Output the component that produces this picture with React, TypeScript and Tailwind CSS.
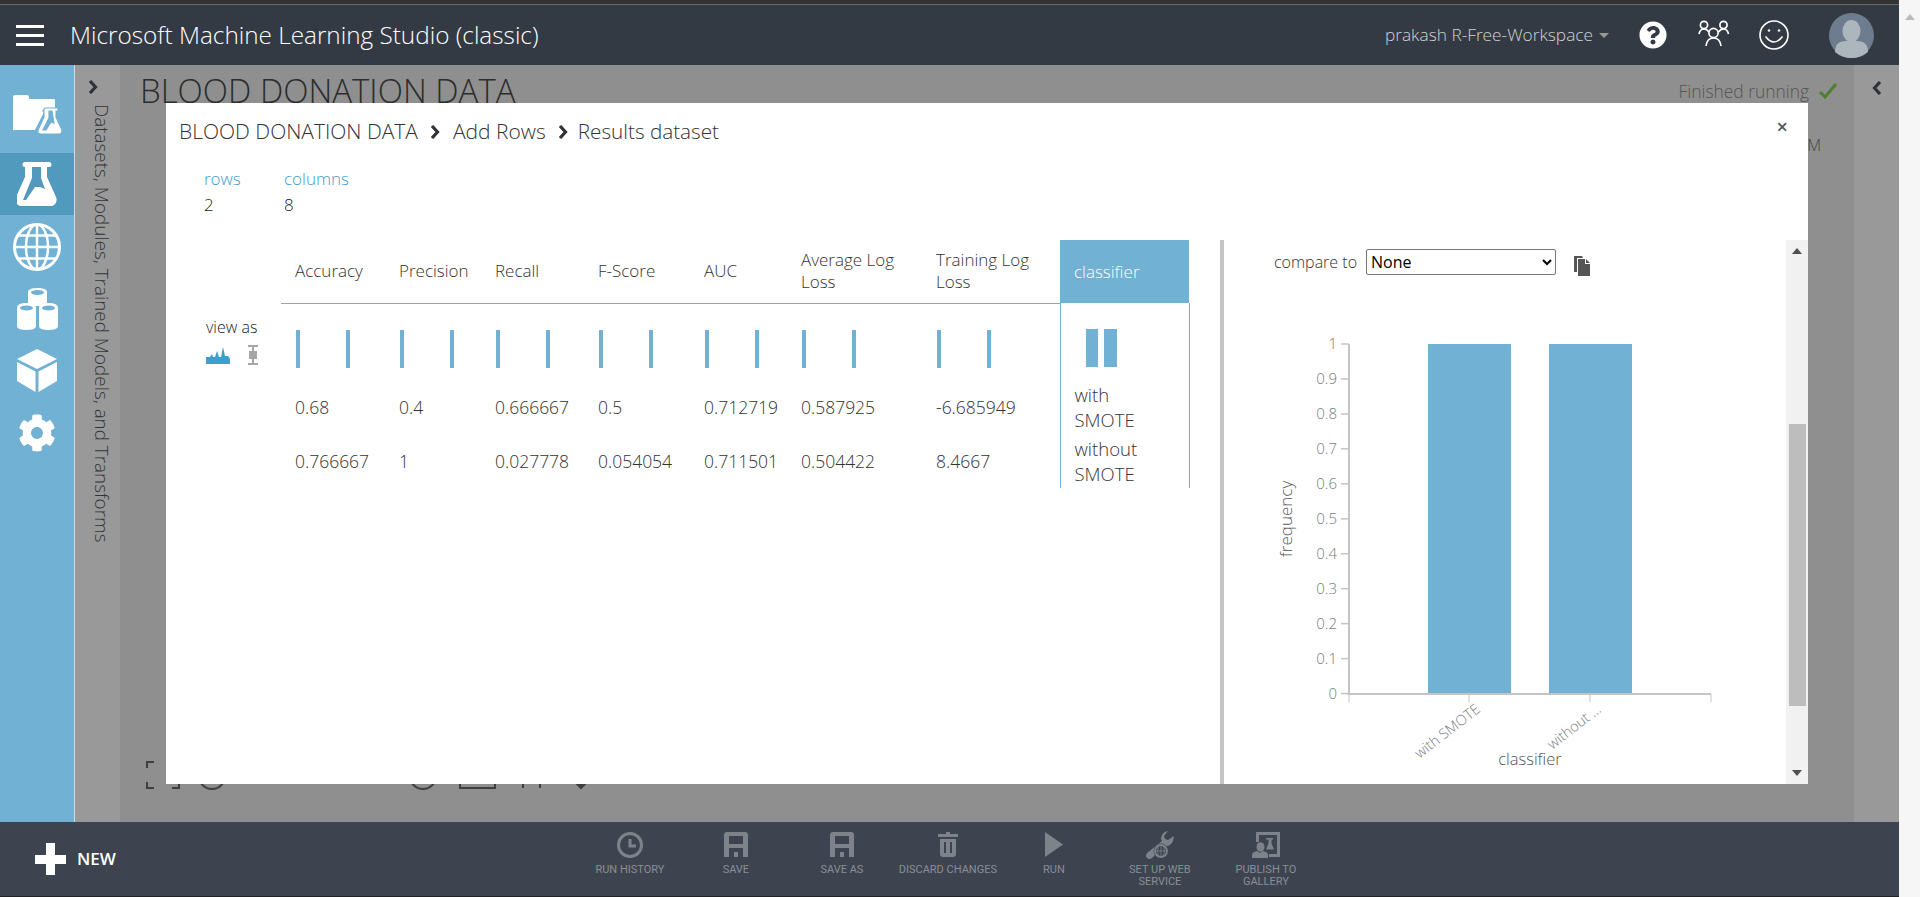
import { FaCog, FaQuestionCircle } from "react-icons/fa";

const font = { light: "font-['Open_Sans',sans-serif] font-light" };

function FolderFlaskIcon() {
  return (
    <svg width="49" height="40" viewBox="0 0 49 40" fill="white">
      <path d="M0 3a2 2 0 0 1 2-2h12a2 2 0 0 1 2 2v2h25a1 1 0 0 1 1 1v8H31v4l-9 18H0Z" />
      <path fillRule="evenodd" d="M32 14h13v3h-2v6l6 13q0 4-3 4H28q-4 0-3-4l6-13v-6h-1Zm4 3v7l-6 12h3l5-8 3 1-2-12Z" stroke="#71b1d3" strokeWidth="1.2" />
    </svg>
  );
}

function FlaskIcon() {
  return (
    <svg width="40" height="44" viewBox="0 0 40 44" fill="white">
      <path fillRule="evenodd" d="M8 0h24a2.500 2.500 0 0 1 0 5h-2v10l9 20q2 5-2 8l-2 1H3l-2-1q-4-3-2-8l9-20V5H8a2.500 2.500 0 0 1 0-5Zm7 5v11L6 38h3l9-13h5l5 2-4-11V5Z" />
    </svg>
  );
}

function GlobeIcon() {
  return (
    <svg width="48" height="48" viewBox="0 0 48 48" fill="none" stroke="white" strokeWidth="2.500">
      <circle cx="24" cy="24" r="22.500" strokeWidth="3" />
      <ellipse cx="24" cy="24" rx="11" ry="22.500" />
      <path d="M24 2v44M2 24h44M6 12.500h36M6 35.500h36" />
    </svg>
  );
}

function CylindersIcon() {
  return (
    <svg width="41" height="42" viewBox="0 0 41 42">
      <g fill="white">
        <path d="M11 4q0-4 9.500-4T30 4v10q0 4-9.500 4T11 14Z" />
        <path d="M0 20q0-5 9.500-5T19 20v18q0 4-9.500 4T0 38Z" />
        <path d="M22 20q0-5 9.500-5t9.500 5v18q0 4-9.500 4T22 38Z" />
      </g>
      <g fill="#71b1d3">
        <ellipse cx="20.500" cy="4.500" rx="6.500" ry="2.500" />
        <ellipse cx="9.500" cy="20" rx="6.500" ry="2.500" />
        <ellipse cx="31.500" cy="20" rx="6.500" ry="2.500" />
      </g>
    </svg>
  );
}

function CubeIcon() {
  return (
    <svg width="40" height="43" viewBox="0 0 40 43" fill="white">
      <path d="M20 0 40 10 20 20 0 10Z" />
      <path d="M0 13 18.500 22.500V43L0 32Z" />
      <path d="M40 13 21.500 22.500V43L40 32Z" />
    </svg>
  );
}

function PeopleIcon() {
  return (
    <svg width="32" height="30" viewBox="0 0 32 30" fill="none" stroke="white" strokeWidth="1.700">
      <circle cx="6" cy="5" r="3.600" />
      <circle cx="25.500" cy="5" r="3.600" />
      <circle cx="15.500" cy="13" r="4.600" />
      <path d="M1 14q1-5 5-5 3 0 5 3M30.500 14q-1-5-5-5-3 0-5 3M8 26q1-8 7.500-8t7.500 8" />
    </svg>
  );
}

function SmileIcon() {
  return (
    <svg width="30" height="30" viewBox="0 0 30 30" fill="none" stroke="white" strokeWidth="1.600">
      <circle cx="15" cy="15" r="14" />
      <circle cx="10" cy="10.500" r="1" fill="white" strokeWidth="0.500" />
      <circle cx="20" cy="10.500" r="1" fill="white" strokeWidth="0.500" />
      <path d="M6.500 16.500q8.500 11 17 0" />
    </svg>
  );
}

function AvatarIcon() {
  return (
    <svg width="45" height="45" viewBox="0 0 45 45">
      <circle cx="22.500" cy="22.500" r="22.500" fill="#6d7d8f" />
      <ellipse cx="22.500" cy="18" rx="9" ry="11" fill="#aeb6bd" />
      <path d="M6 39q0-11 11-11h11q11 0 11 11-7 6-16.500 6T6 39Z" fill="#aeb6bd" />
    </svg>
  );
}

function Chevron({ dir }: { dir: "left" | "right" }) {
  return (
    <svg width="10" height="14" viewBox="0 0 10 14" fill="none" stroke="#2f3338" strokeWidth="3.200">
      <path d={dir === "right" ? "M2 1l5.500 6L2 13" : "M8 1 2.500 7 8 13"} />
    </svg>
  );
}

const toolbar = [
  {
    label: "RUN HISTORY",
    icon: (
      <svg width="28" height="26" viewBox="0 0 28 26" fill="none" stroke="#7e838b" strokeWidth="3">
        <circle cx="14" cy="13" r="11.500" />
        <path d="M14 7v7h6" />
      </svg>
    ),
  },
  {
    label: "SAVE",
    icon: (
      <svg width="24" height="25" viewBox="0 0 24 25" fill="#7e838b" fillRule="evenodd">
        <path d="M3 0h18a3 3 0 0 1 3 3v22H0V3a3 3 0 0 1 3-3ZM5 4v8h14V4ZM5 16v9h14v-9ZM10 20h4v5h-4Z" />
      </svg>
    ),
  },
  {
    label: "SAVE AS",
    icon: (
      <svg width="24" height="25" viewBox="0 0 24 25" fill="#7e838b" fillRule="evenodd">
        <path d="M3 0h18a3 3 0 0 1 3 3v22H0V3a3 3 0 0 1 3-3ZM5 4v8h14V4ZM5 16v9h14v-9ZM10 20h4v5h-4Z" />
      </svg>
    ),
  },
  {
    label: "DISCARD CHANGES",
    icon: (
      <svg width="22" height="25" viewBox="0 0 22 25" fill="#7e838b" fillRule="evenodd">
        <path d="M9 0h4v2h8v3H1V2h8ZM3 7h16v15a3 3 0 0 1-3 3H6a3 3 0 0 1-3-3ZM7 10v11h2V10ZM13 10v11h2V10Z" />
      </svg>
    ),
  },
  {
    label: "RUN",
    icon: (
      <svg width="20" height="25" viewBox="0 0 20 25" fill="#7e838b">
        <path d="M1 0 19 12.500 1 25Z" />
      </svg>
    ),
  },
  {
    label: "SET UP WEB\nSERVICE",
    icon: (
      <svg width="28" height="28" viewBox="0 0 28 28" fill="#7e838b">
        <path d="M22 0q-6 1-7 7 0 2 1 3L1 22q-2 3 0 5t5 0l7-7 7-5q5 0 7-5l1-5-6 4-3-1-1-3Z" />
        <circle cx="15" cy="20" r="7.500" fill="#3d4450" />
        <circle cx="15" cy="20" r="6" fill="none" stroke="#7e838b" strokeWidth="1.800" />
        <path d="M15 14v12M9 20h12M12.500 15q-2 5 0 10M17.500 15q2 5 0 10" fill="none" stroke="#7e838b" strokeWidth="0.800" />
      </svg>
    ),
  },
  {
    label: "PUBLISH TO\nGALLERY",
    icon: (
      <svg width="28" height="26" viewBox="0 0 28 26" fill="#7e838b">
        <path d="M4 0h24v25H17v-3h8V3H7v7H4Z" />
        <path d="M14 6h7v1.500h-1.500v4l2.500 6h-8l2.500-6v-4H14Z" />
        <ellipse cx="8.500" cy="15" rx="4" ry="4.800" />
        <path d="M0 26v-3q0-3 5-4l3 2 3-2q5 1 5 4v3Z" />
      </svg>
    ),
  },
];

const sparkCols = [1, 2, 3, 4, 5, 6, 7];

const headers = [
  { label: "Accuracy", w: "w-[104px]" },
  { label: "Precision", w: "w-[96px]" },
  { label: "Recall", w: "w-[103px]" },
  { label: "F-Score", w: "w-[106px]" },
  { label: "AUC", w: "w-[97px]" },
  { label: "Average Log Loss", w: "w-[135px]" },
  { label: "Training Log Loss", w: "w-[138px]" },
];

const rows = [
  { values: ["0.68", "0.4", "0.666667", "0.5", "0.712719", "0.587925", "-6.685949"], cls: "with SMOTE" },
  { values: ["0.766667", "1", "0.027778", "0.054054", "0.711501", "0.504422", "8.4667"], cls: "without SMOTE" },
];

const yTicks = ["1", "0.9", "0.8", "0.7", "0.6", "0.5", "0.4", "0.3", "0.2", "0.1", "0"];

function Chart() {
  return (
    <svg width="562" height="494" viewBox="1224 290 562 494" className="block">
      <g fill="#777c82" fontFamily="Open Sans" fontWeight="300" fontSize="15">
        {yTicks.map((t, i) => {
          const y = 344 + i * 34.96;
          return (
            <g key={t}>
              <line x1="1341" x2="1349" y1={y} y2={y} stroke="#c4c4c4" strokeWidth="1.500" />
              <text x="1337" y={y + 5} textAnchor="end">
                {t}
              </text>
            </g>
          );
        })}
        <text transform="translate(1292 519) rotate(-90)" textAnchor="middle" fontSize="17" fill="#555">
          frequency
        </text>
        <text transform="translate(1481 711) rotate(-38)" textAnchor="end" fontSize="14.500">
          with SMOTE
        </text>
        <text transform="translate(1602 711) rotate(-38)" textAnchor="end" fontSize="14.500">
          without ...
        </text>
        <text x="1530" y="765" textAnchor="middle" fontSize="16.500" fill="#555">
          classifier
        </text>
      </g>
      <rect x="1428" y="344" width="83" height="350" fill="#71b1d3" />
      <rect x="1549" y="344" width="83" height="350" fill="#71b1d3" />
      <path d="M1349 344V694H1711" fill="none" stroke="#c4c4c4" strokeWidth="2" />
      <path d="M1349 694v8M1469 694v8M1590 694v8M1711 694v8" stroke="#c4c4c4" strokeWidth="1" />
    </svg>
  );
}

function ResultsTable() {
  return (
    <table className="w-[908px] table-fixed self-start border-collapse text-[17.500px] text-[#333]">
      <thead>
        <tr className="h-[63px] text-[17px]">
          {headers.map((h) => (
            <th key={h.label} className={`${h.w} border-b border-[#71b1d3] pl-[14px] pr-[4px] text-left font-light leading-[22px]`}>
              {h.label}
            </th>
          ))}
          <th className="w-[129px] bg-[#71b1d3] pl-[14px] text-left font-light text-white">classifier</th>
        </tr>
      </thead>
      <tbody>
        <tr className="h-[77px]">
          {sparkCols.map((c) => (
            <td key={c} className="pl-[15px] align-top">
              <div className="mt-[26px] flex gap-[46px]">
                <div className="h-[38px] w-[4px] bg-[#71b1d3]" />
                <div className="h-[38px] w-[4px] bg-[#71b1d3]" />
              </div>
            </td>
          ))}
          <td className="border-x border-[#71b1d3] pl-[25px] align-top">
            <div className="mt-[26px] flex gap-[6px]">
              <div className="h-[38px] w-[12px] bg-[#71b1d3]" />
              <div className="h-[38px] w-[13px] bg-[#71b1d3]" />
            </div>
          </td>
        </tr>
        {rows.map((r) => (
          <tr key={r.cls} className="h-[54px]">
            {r.values.map((v, i) => (
              <td key={i} className="pl-[14px] align-middle">
                {v}
              </td>
            ))}
            <td className="border-x border-[#71b1d3] pl-[14px] pr-[30px] text-[18.500px] leading-[25px]">{r.cls}</td>
          </tr>
        ))}
      </tbody>
    </table>
  );
}

function ResultsModal() {
  return (
    <div className="absolute left-[46px] top-[38px] flex h-[681px] w-[1642px] flex-col bg-white">
      <div className="relative flex h-[58px] items-center gap-[12px] pl-[13px] text-[21px] font-light text-[#333]">
        <span>BLOOD DONATION DATA</span>
        <Chevron dir="right" />
        <span className="ml-[1px]">Add Rows</span>
        <Chevron dir="right" />
        <span className="-ml-[2px] text-[20.700px]">Results dataset</span>
        <span className="absolute right-[20px] top-[14px] text-[20px] font-semibold leading-none text-[#555]">×</span>
      </div>
      <div className="mt-[5px] flex pl-[38px] text-[17px] font-light leading-[26px]">
        <div className="w-[80px]">
          <div className="text-[#3f9ccb]">rows</div>
          <div className="text-[#222]">2</div>
        </div>
        <div>
          <div className="text-[#3f9ccb]">columns</div>
          <div className="text-[#222]">8</div>
        </div>
      </div>
      <div className="mt-[22px] flex min-h-0 flex-1">
        <div className="flex w-[1054px] pl-[40px]">
          <div className="w-[75px] shrink-0 pt-[77px]">
            <div className="text-[16px] font-light leading-[20px] text-[#222]">view as</div>
            <div className="mt-[8px] flex items-end gap-[16px]">
              <svg width="26" height="17" viewBox="0 0 26 17" fill="#3b9fcc">
                <path d="M0 17V10h4l2-3 1 3h2l2-6 2 6h2l2-10 2 9h3l2 3v8Z" />
              </svg>
              <svg width="10" height="20" viewBox="0 0 10 20" fill="#a6a6a6" className="mb-[-1px]">
                <path d="M0 0h10v2H6v4h3v8H6v4h4v2H0v-2h4v-4H1V6h3V2H0Z" />
              </svg>
            </div>
          </div>
          <ResultsTable />
        </div>
        <div className="w-[4px] bg-[#c4c4c4]" />
        <div className="flex-1">
          <div className="flex items-center pl-[50px] pt-[7px]">
            <span className="mr-[9px] text-[16px] font-light text-[#333]">compare to</span>
            <select className="h-[26px] w-[190px] rounded-[2px] border border-[#767676] bg-white text-[16px] font-normal text-black">
              <option>None</option>
            </select>
            <svg width="16" height="20" viewBox="0 0 16 20" fill="#555" className="ml-[18px] mt-[9px]">
              <path d="M0 0h8l1 2H3v14H0Z" />
              <path d="M4 3h7v5h5v12H4Z" />
              <path d="M12 3l4 4h-4Z" />
            </svg>
          </div>
          <div className="mt-[14px]">
            <Chart />
          </div>
        </div>
        <div className="flex w-[22px] flex-col items-center justify-between bg-[#f1f1f1] py-[8px]">
          <div className="h-0 w-0 border-x-[5px] border-b-[6px] border-x-transparent border-b-[#505050]" />
          <div className="mx-auto mb-[64px] mt-[170px] w-[17px] flex-1 bg-[#bdbdbd]" />
          <div className="h-0 w-0 border-x-[5px] border-t-[6px] border-x-transparent border-t-[#505050]" />
        </div>
      </div>
    </div>
  );
}

export default function App() {
  return (
    <div className={`${font.light} flex h-[897px] w-[1920px] overflow-hidden bg-[#f6f6f6]`}>
      <div className="flex h-full w-[1899px] flex-col">
        <div className="h-[5px] border-b border-[#6a6a6a] bg-[#333]" />

        {/* top bar */}
        <header className="flex h-[60px] items-center bg-[#343a43] text-white">
          <div className="ml-[16px] flex w-[28px] flex-col gap-[6px]">
            <div className="h-[3px] bg-white" />
            <div className="h-[3px] bg-white" />
            <div className="h-[3px] bg-white" />
          </div>
          <div className="ml-[26px] text-[24.300px] leading-none">Microsoft Machine Learning Studio (classic)</div>
          <div className="ml-auto flex items-center">
            <span className="text-[17.300px] text-[#d0d2d4]">prakash R-Free-Workspace</span>
            <div className="ml-[6px] mt-[1px] h-0 w-0 border-x-[5px] border-t-[5px] border-x-transparent border-t-[#999]" />
            <FaQuestionCircle className="ml-[30px] text-white" size={28} />
            <div className="ml-[31px]">
              <PeopleIcon />
            </div>
            <div className="ml-[29px]">
              <SmileIcon />
            </div>
            <div className="ml-[40px] mr-[25px]">
              <AvatarIcon />
            </div>
          </div>
        </header>

        <div className="flex min-h-0 flex-1">
          {/* nav */}
          <nav className="flex w-[75px] flex-col border-r border-[#d4d9dc] bg-[#71b1d3]">
            <div className="flex h-[88px] items-center justify-center pt-[10px]">
              <FolderFlaskIcon />
            </div>
            <div className="flex h-[62px] items-center justify-center bg-[#5199bd]">
              <FlaskIcon />
            </div>
            <div className="flex h-[63px] items-center justify-center">
              <GlobeIcon />
            </div>
            <div className="flex h-[62px] items-center justify-center">
              <CylindersIcon />
            </div>
            <div className="flex h-[60px] items-center justify-center">
              <CubeIcon />
            </div>
            <div className="flex h-[66px] items-center justify-center">
              <FaCog className="text-white" size={38} />
            </div>
          </nav>

          {/* palette, collapsed */}
          <div className="flex w-[45px] flex-col items-center bg-[#999] pt-[15px]">
            <div className="-ml-[10px]">
              <Chevron dir="right" />
            </div>
            <div className="ml-[8px] mt-[10px] text-[18.850px] leading-[20px] text-[#333] [writing-mode:vertical-rl]">
              Datasets, Modules, Trained Models, and Transforms
            </div>
          </div>

          {/* canvas, dimmed behind the results dialog */}
          <main className="relative flex min-w-0 flex-1 flex-col bg-[#8f8f8f]">
            <div className="flex h-[50px] items-center justify-between pl-[20px] pr-[17px] pt-[2px]">
              <span className="text-[33px] text-[#2c2c2c]">BLOOD DONATION DATA</span>
              <span className="flex items-center gap-[10px] text-[17.400px] text-[#555]">
                Finished running
                <svg width="18" height="16" viewBox="0 0 18 16" fill="none" stroke="#4e7f2e" strokeWidth="3">
                  <path d="M1 9l5 5L17 1" />
                </svg>
              </span>
            </div>
            <div className="mt-[18px] flex justify-end pr-[33px] text-[16px] text-[#444]">M</div>
            <div className="mt-auto pb-[32px] pl-[26px]">
              <svg width="480" height="30" viewBox="146 760 480 30" fill="none" stroke="#3f3f3f" strokeWidth="2" className="block">
                <path d="M154 762h-7v6M172 762h7v6M154 788h-7v-6M172 788h7v-6" />
                <circle cx="212" cy="776" r="13" />
                <circle cx="423" cy="776" r="13" />
                <rect x="460" y="770" width="35" height="18" />
                <path d="M523 770v18M540 770v18" />
                <path d="M575 782h12l-6 6Z" fill="#3f3f3f" />
              </svg>
            </div>
            <ResultsModal />
          </main>

          <div className="flex w-[45px] justify-center bg-[#999] pt-[16px]">
            <Chevron dir="left" />
          </div>
        </div>

        {/* command bar */}
        <footer className="relative flex h-[75px] items-center border-b border-[#222] bg-[#3d4450]">
          <div className="ml-[35px] flex items-center gap-[11px]">
            <svg width="31" height="32" viewBox="0 0 31 32" fill="white">
              <path d="M11 0h9v12h11v9H20v11h-9V21H0v-9h11Z" />
            </svg>
            <span className="text-[17px] font-semibold text-white">NEW</span>
          </div>
          <div className="ml-[461px] flex">
            {toolbar.map((t) => (
              <div key={t.label} className="flex w-[106px] flex-col items-center">
                <div className="flex h-[28px] items-center">{t.icon}</div>
                <div className="mt-[5px] whitespace-pre-line text-center font-['Roboto',sans-serif] text-[11px] font-normal leading-[12px] text-[#8a8e95]">
                  {t.label}
                </div>
              </div>
            ))}
          </div>
        </footer>
      </div>

      <div className="flex w-[21px] justify-center pt-[14px]">
        <div className="h-0 w-0 border-x-[5px] border-b-[6px] border-x-transparent border-b-[#bbb]" />
      </div>
    </div>
  );
}
